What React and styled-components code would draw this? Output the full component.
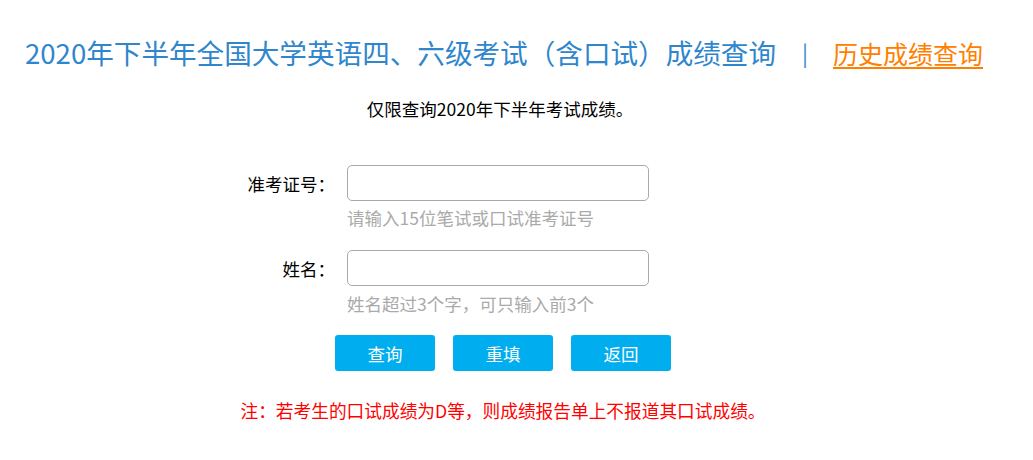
import React from 'react';
import styled, { createGlobalStyle } from 'styled-components';

const GlobalStyle = createGlobalStyle`
  html, body {
    margin: 0;
    padding: 0;
    background: #fff;
  }
  body {
    font-family: "Microsoft YaHei", "Noto Sans CJK SC", "Noto Sans", sans-serif;
  }
`;

const Page = styled.div`
  width: 1000px;
  padding-top: 32px;
  text-align: center;
`;

const Title = styled.h1`
  margin: 0;
  padding-left: 8px;
  font-size: 27.6px;
  font-weight: normal;
  line-height: 40px;
  color: #2f86cc;
  white-space: nowrap;
`;

const Sep = styled.span`
  margin: 0 25px 0 26px;
  font-size: 22px;
  vertical-align: 2px;
`;

const HistoryLink = styled.a`
  font-size: 25px;
  color: #ff8000;
  text-decoration: underline;
  text-underline-offset: 3px;
  cursor: pointer;
`;

const Notice = styled.p`
  margin: 24px 0 0;
  font-size: 17.5px;
  line-height: 24px;
  color: #000;
`;

const Form = styled.form`
  margin-top: 44px;
`;

const Row = styled.div`
  display: grid;
  grid-template-columns: 347px 302px;
  align-items: center;
  text-align: left;
`;

const Label = styled.label`
  font-size: 17.5px;
  color: #000;
  text-align: right;
  padding-right: 12px;
`;

const Input = styled.input`
  box-sizing: border-box;
  width: 302px;
  height: 36px;
  border: 1px solid #aaa;
  border-radius: 5px;
  padding: 0 8px;
  font-size: 16px;
  outline: none;
`;

const Hint = styled.div`
  grid-column: 2;
  margin-top: ${(p) => p.$gap}px;
  margin-bottom: ${(p) => p.$after}px;
  font-size: 17.5px;
  line-height: 22px;
  color: #aaa;
  white-space: nowrap;
`;

const Buttons = styled.div`
  display: flex;
  gap: 18px;
  padding-left: 335px;
`;

const Button = styled.button`
  width: 100px;
  height: 36px;
  border: none;
  border-radius: 3px;
  background: #00aeef;
  color: #fff;
  font-family: inherit;
  font-size: 17.5px;
  cursor: pointer;
`;

const Note = styled.p`
  margin: 27px 0 0;
  padding-left: 6px;
  font-size: 17.7px;
  line-height: 24px;
  color: #f00;
`;

export default function App() {
  return (
    <>
      <GlobalStyle />
      <Page>
        <Title>
          2020年下半年全国大学英语四、六级考试（含口试）成绩查询
          <Sep>|</Sep>
          <HistoryLink>历史成绩查询</HistoryLink>
        </Title>
        <Notice>仅限查询2020年下半年考试成绩。</Notice>
        <Form onSubmit={(e) => e.preventDefault()}>
          <Row>
            <Label>准考证号：</Label>
            <Input type="text" />
            <Hint $gap={6} $after={21}>请输入15位笔试或口试准考证号</Hint>
          </Row>
          <Row>
            <Label>姓名：</Label>
            <Input type="text" />
            <Hint $gap={7} $after={20}>姓名超过3个字，可只输入前3个</Hint>
          </Row>
          <Buttons>
            <Button type="submit">查询</Button>
            <Button type="reset">重填</Button>
            <Button type="button">返回</Button>
          </Buttons>
        </Form>
        <Note>注：若考生的口试成绩为D等，则成绩报告单上不报道其口试成绩。</Note>
      </Page>
    </>
  );
}
